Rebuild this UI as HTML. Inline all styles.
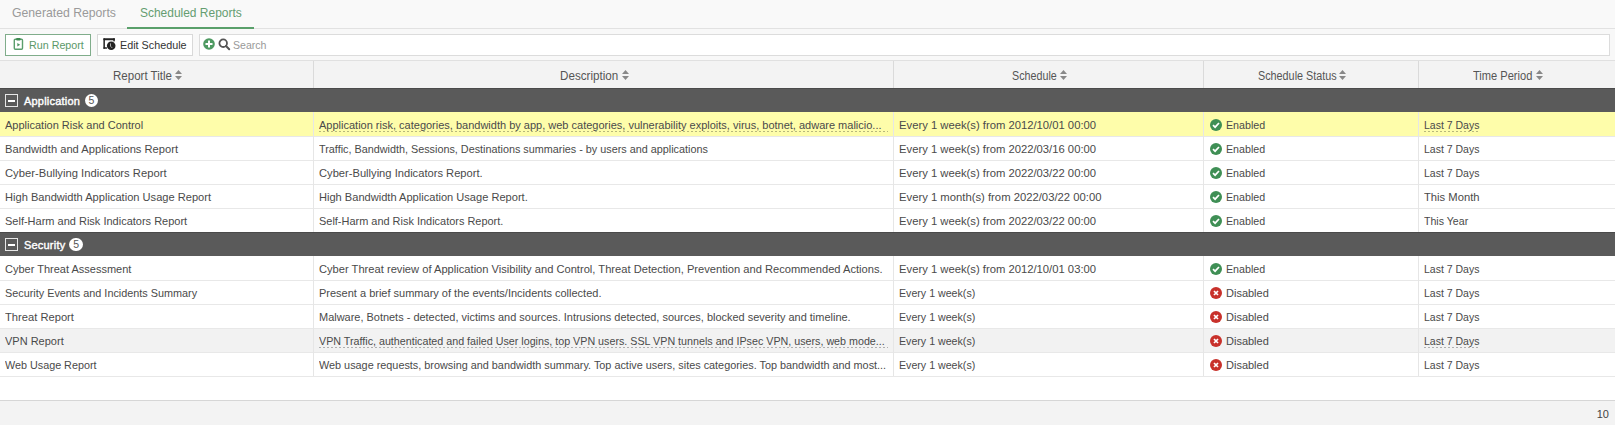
<!DOCTYPE html>
<html><head><meta charset="utf-8">
<style>
*{box-sizing:border-box;margin:0;padding:0}
html,body{width:1615px;height:425px;overflow:hidden;background:#f8f8f8;font-family:"Liberation Sans",sans-serif;color:#333}
.abs{position:absolute}
.t{display:inline-block;transform-origin:0 50%;white-space:nowrap}
.tabs{left:0;top:0;width:1615px;height:29px;background:#f9f9f9;border-bottom:1px solid #e2e2e2}
.tab{position:absolute;top:0;height:29px;font-size:13px;line-height:25px}
.t1{left:12px;color:#9a9a9a}
.t2{left:140px;color:#659d71}
.uline{left:127px;top:27px;width:127px;height:2px;background:#5aa06b}
.btn{position:absolute;top:34px;height:22px;background:#fff;border:1px solid #d9d9d9;font-size:11px;line-height:20px}
.search{left:199px;top:34px;width:1411px;height:22px;background:#fff;border:1px solid #dcdcdc}
.toolbar-line{left:0;top:60px;width:1615px;height:1px;background:#e0e0e0}
.hdr{left:0;top:61px;width:1615px;height:27px;background:#f3f3f3}
.hdr .ht{position:absolute;white-space:nowrap;font-size:12px;color:#555;line-height:26px;top:2px}
.hdr .s{position:absolute;width:7px;height:10px;top:9px}
.vd{position:absolute;width:1px;background:#dadada}
.bv{background:#e6e6e6}
.grp{position:absolute;left:0;width:1615px;height:24px;background:#5a5a5a;border-top:1px solid #4a4a4a;color:#fff}
.grp .box{position:absolute;left:5px;top:5px;width:13px;height:13px;border:1px solid #e6e6e6}
.grp .box i{position:absolute;left:2px;top:5px;width:7px;height:2px;background:#fff}
.grp .lbl{position:absolute;left:24px;top:1px;line-height:23px;font-size:11px;font-weight:normal;-webkit-text-stroke:0.4px #fff;letter-spacing:0.2px}
.grp .badge{position:absolute;top:4.8px;width:13.4px;height:13.4px;border-radius:50%;background:#fff;color:#555;font-size:10.5px;line-height:13.4px;text-align:center}
.row{position:absolute;left:0;width:1615px;height:24px;background:#fff;font-size:11px;color:#4a4a4a}
.sep{position:absolute;left:0;width:1615px;height:1px;background:#e8e8e8}
.row.sel{background:#fefdaa}
.row.hov{background:#f2f2f2}
.c{position:absolute;top:0;height:24px;line-height:24px;padding-top:1px;white-space:nowrap;overflow:hidden}
.c1{left:5px;width:305px}
.c2{left:319px;width:572px}
.c3{left:899px;width:300px}
.c4{left:1210px;width:205px}
.c5{left:1424px;width:190px}
.ul{position:absolute;height:1px;background:repeating-linear-gradient(90deg,rgba(0,0,0,0.28) 0 2px,transparent 2px 4px)}
.ic{display:inline-block;width:12px;height:12px;vertical-align:-2px;margin-right:4px}
.footer{left:0;top:400px;width:1615px;height:25px;background:#f3f3f3;border-top:1px solid #d6d6d6}
.blank{left:0;top:377px;width:1615px;height:23px;background:#fff}

</style></head>
<body>
<div class="abs tabs"></div>
<div class="tab t1"><span class="t" style="transform:scaleX(0.94)">Generated Reports</span></div>
<div class="tab t2"><span class="t" style="transform:scaleX(0.92)">Scheduled Reports</span></div>
<div class="abs uline"></div>
<div class="btn" style="left:5px;width:86px;border-color:#80ad8b;color:#5b9868">
  <svg class="abs" style="left:6.9px;top:2.4px" width="11" height="13" viewBox="0 0 11 13"><rect x="1.3" y="2.3" width="8.2" height="10" rx="1" fill="none" stroke="#5a9e6c" stroke-width="1.4"/><rect x="3.2" y="1" width="4.4" height="2.6" rx="0.8" fill="#3f8a52"/><path d="M4.3 6 L7.2 7.7 L4.3 9.4Z" fill="#4f9562"/></svg>
  <span class="abs t" style="left:22.6px;top:0;transform:scaleX(0.975)">Run Report</span>
</div>
<div class="btn" style="left:97px;width:96px;color:#333">
  <svg class="abs" style="left:5px;top:3px" width="14" height="13" viewBox="0 0 14 13"><rect x="0.4" y="0.2" width="11.4" height="2" rx="0.6" fill="#222"/><rect x="10.3" y="0.2" width="1.5" height="3.2" fill="#222"/><rect x="0.4" y="0.2" width="1.5" height="10.6" rx="0.5" fill="#222"/><rect x="0.4" y="9.3" width="3.6" height="1.5" rx="0.5" fill="#222"/><circle cx="8.2" cy="7.8" r="4.3" fill="#222"/><path d="M7.5 5.4 V8.2 L9.2 9.9" fill="none" stroke="#bbb" stroke-width="0.9"/></svg>
  <span class="abs t" style="left:22px;top:0;transform:scaleX(0.98)">Edit Schedule</span>
</div>
<div class="abs search">
  <svg class="abs" style="left:3px;top:3px" width="12" height="12" viewBox="0 0 12 12"><circle cx="6" cy="6" r="5.8" fill="#4e9a62"/><path d="M6 2.5 V9.5 M2.5 6 H9.5" stroke="#fff" stroke-width="2"/></svg>
  <svg class="abs" style="left:18px;top:3px" width="13" height="13" viewBox="0 0 13 13"><circle cx="5.2" cy="5.2" r="3.8" fill="none" stroke="#555" stroke-width="1.8"/><path d="M8 8 L11.2 11.2" stroke="#555" stroke-width="2" stroke-linecap="round"/></svg>
  <span class="abs t" style="left:33px;top:0;font-size:11px;line-height:20px;color:#999;transform:scaleX(0.96)">Search</span>
</div>
<div class="abs toolbar-line"></div>
<div class="abs hdr"><span class="ht t" style="left:112.9px;transform:scaleX(0.96)">Report Title</span><svg class="s" style="left:175px" viewBox="0 0 7 10"><path d="M3.5 0 L7 4 H0Z M0 6 H7 L3.5 10Z" fill="#888"/></svg><span class="ht t" style="left:560.1999999999999px;transform:scaleX(0.97)">Description</span><svg class="s" style="left:621.5px" viewBox="0 0 7 10"><path d="M3.5 0 L7 4 H0Z M0 6 H7 L3.5 10Z" fill="#888"/></svg><span class="ht t" style="left:1011.9px;transform:scaleX(0.894)">Schedule</span><svg class="s" style="left:1060.2px" viewBox="0 0 7 10"><path d="M3.5 0 L7 4 H0Z M0 6 H7 L3.5 10Z" fill="#888"/></svg><span class="ht t" style="left:1257.8000000000002px;transform:scaleX(0.9)">Schedule Status</span><svg class="s" style="left:1339.2px" viewBox="0 0 7 10"><path d="M3.5 0 L7 4 H0Z M0 6 H7 L3.5 10Z" fill="#888"/></svg><span class="ht t" style="left:1472.7px;transform:scaleX(0.924)">Time Period</span><svg class="s" style="left:1535.7px" viewBox="0 0 7 10"><path d="M3.5 0 L7 4 H0Z M0 6 H7 L3.5 10Z" fill="#888"/></svg><div class="vd hv" style="left:313px;top:0;height:27px"></div><div class="vd hv" style="left:893px;top:0;height:27px"></div><div class="vd hv" style="left:1203px;top:0;height:27px"></div><div class="vd hv" style="left:1418px;top:0;height:27px"></div></div>
<div class="grp" style="top:88px"><div class="box"><i></i></div><span class="lbl">Application</span><span class="badge" style="left:84.8px">5</span></div>
<div class="row sel" style="top:112px"><div class="c c1"><span class="t" style="transform:scaleX(1.0)">Application Risk and Control</span></div><div class="c c2"><span class="t dot" style="transform:scaleX(1.0)">Application risk, categories, bandwidth by app, web categories, vulnerability exploits, virus, botnet, adware malicio...</span></div><div class="c c3"><span class="t" style="transform:scaleX(1.023)">Every 1 week(s) from 2012/10/01 00:00</span></div><div class="c c4"><svg class="ic" viewBox="0 0 12 12"><circle cx="6" cy="6" r="6" fill="#3f8f55"/><path d="M3 6.2 L5.1 8.2 L9 4" fill="none" stroke="#fff" stroke-width="1.7"/></svg><span class="t" style="transform:scaleX(0.97)">Enabled</span></div><div class="c c5"><span class="t dot" style="transform:scaleX(0.955)">Last 7 Days</span></div></div>
<div class="row " style="top:136px"><div class="c c1"><span class="t" style="transform:scaleX(1.014)">Bandwidth and Applications Report</span></div><div class="c c2"><span class="t" style="transform:scaleX(0.983)">Traffic, Bandwidth, Sessions, Destinations summaries - by users and applications</span></div><div class="c c3"><span class="t" style="transform:scaleX(1.023)">Every 1 week(s) from 2022/03/16 00:00</span></div><div class="c c4"><svg class="ic" viewBox="0 0 12 12"><circle cx="6" cy="6" r="6" fill="#3f8f55"/><path d="M3 6.2 L5.1 8.2 L9 4" fill="none" stroke="#fff" stroke-width="1.7"/></svg><span class="t" style="transform:scaleX(0.97)">Enabled</span></div><div class="c c5"><span class="t" style="transform:scaleX(0.955)">Last 7 Days</span></div></div>
<div class="row " style="top:160px"><div class="c c1"><span class="t" style="transform:scaleX(1.02)">Cyber-Bullying Indicators Report</span></div><div class="c c2"><span class="t" style="transform:scaleX(1.014)">Cyber-Bullying Indicators Report.</span></div><div class="c c3"><span class="t" style="transform:scaleX(1.023)">Every 1 week(s) from 2022/03/22 00:00</span></div><div class="c c4"><svg class="ic" viewBox="0 0 12 12"><circle cx="6" cy="6" r="6" fill="#3f8f55"/><path d="M3 6.2 L5.1 8.2 L9 4" fill="none" stroke="#fff" stroke-width="1.7"/></svg><span class="t" style="transform:scaleX(0.97)">Enabled</span></div><div class="c c5"><span class="t" style="transform:scaleX(0.955)">Last 7 Days</span></div></div>
<div class="row " style="top:184px"><div class="c c1"><span class="t" style="transform:scaleX(1.009)">High Bandwidth Application Usage Report</span></div><div class="c c2"><span class="t" style="transform:scaleX(1.007)">High Bandwidth Application Usage Report.</span></div><div class="c c3"><span class="t" style="transform:scaleX(1.025)">Every 1 month(s) from 2022/03/22 00:00</span></div><div class="c c4"><svg class="ic" viewBox="0 0 12 12"><circle cx="6" cy="6" r="6" fill="#3f8f55"/><path d="M3 6.2 L5.1 8.2 L9 4" fill="none" stroke="#fff" stroke-width="1.7"/></svg><span class="t" style="transform:scaleX(0.97)">Enabled</span></div><div class="c c5"><span class="t" style="transform:scaleX(1.02)">This Month</span></div></div>
<div class="row " style="top:208px"><div class="c c1"><span class="t" style="transform:scaleX(1.0)">Self-Harm and Risk Indicators Report</span></div><div class="c c2"><span class="t" style="transform:scaleX(0.995)">Self-Harm and Risk Indicators Report.</span></div><div class="c c3"><span class="t" style="transform:scaleX(1.023)">Every 1 week(s) from 2022/03/22 00:00</span></div><div class="c c4"><svg class="ic" viewBox="0 0 12 12"><circle cx="6" cy="6" r="6" fill="#3f8f55"/><path d="M3 6.2 L5.1 8.2 L9 4" fill="none" stroke="#fff" stroke-width="1.7"/></svg><span class="t" style="transform:scaleX(0.97)">Enabled</span></div><div class="c c5"><span class="t" style="transform:scaleX(0.963)">This Year</span></div></div>
<div class="grp" style="top:232px"><div class="box"><i></i></div><span class="lbl">Security</span><span class="badge" style="left:69.4px">5</span></div>
<div class="row " style="top:256px"><div class="c c1"><span class="t" style="transform:scaleX(1.0)">Cyber Threat Assessment</span></div><div class="c c2"><span class="t" style="transform:scaleX(1.013)">Cyber Threat review of Application Visibility and Control, Threat Detection, Prevention and Recommended Actions.</span></div><div class="c c3"><span class="t" style="transform:scaleX(1.023)">Every 1 week(s) from 2012/10/01 03:00</span></div><div class="c c4"><svg class="ic" viewBox="0 0 12 12"><circle cx="6" cy="6" r="6" fill="#3f8f55"/><path d="M3 6.2 L5.1 8.2 L9 4" fill="none" stroke="#fff" stroke-width="1.7"/></svg><span class="t" style="transform:scaleX(0.97)">Enabled</span></div><div class="c c5"><span class="t" style="transform:scaleX(0.955)">Last 7 Days</span></div></div>
<div class="row " style="top:280px"><div class="c c1"><span class="t" style="transform:scaleX(0.985)">Security Events and Incidents Summary</span></div><div class="c c2"><span class="t" style="transform:scaleX(1.0)">Present a brief summary of the events/Incidents collected.</span></div><div class="c c3"><span class="t" style="transform:scaleX(0.967)">Every 1 week(s)</span></div><div class="c c4"><svg class="ic" viewBox="0 0 12 12"><circle cx="6" cy="6" r="6" fill="#c8312b"/><path d="M4 4 L8 8 M8 4 L4 8" stroke="#fff" stroke-width="1.7"/></svg><span class="t" style="transform:scaleX(1.0)">Disabled</span></div><div class="c c5"><span class="t" style="transform:scaleX(0.955)">Last 7 Days</span></div></div>
<div class="row " style="top:304px"><div class="c c1"><span class="t" style="transform:scaleX(1.016)">Threat Report</span></div><div class="c c2"><span class="t" style="transform:scaleX(0.996)">Malware, Botnets - detected, victims and sources. Intrusions detected, sources, blocked severity and timeline.</span></div><div class="c c3"><span class="t" style="transform:scaleX(0.967)">Every 1 week(s)</span></div><div class="c c4"><svg class="ic" viewBox="0 0 12 12"><circle cx="6" cy="6" r="6" fill="#c8312b"/><path d="M4 4 L8 8 M8 4 L4 8" stroke="#fff" stroke-width="1.7"/></svg><span class="t" style="transform:scaleX(1.0)">Disabled</span></div><div class="c c5"><span class="t" style="transform:scaleX(0.955)">Last 7 Days</span></div></div>
<div class="row hov" style="top:328px"><div class="c c1"><span class="t" style="transform:scaleX(1.0)">VPN Report</span></div><div class="c c2"><span class="t dot" style="transform:scaleX(0.974)">VPN Traffic, authenticated and failed User logins, top VPN users. SSL VPN tunnels and IPsec VPN, users, web mode...</span></div><div class="c c3"><span class="t" style="transform:scaleX(0.967)">Every 1 week(s)</span></div><div class="c c4"><svg class="ic" viewBox="0 0 12 12"><circle cx="6" cy="6" r="6" fill="#c8312b"/><path d="M4 4 L8 8 M8 4 L4 8" stroke="#fff" stroke-width="1.7"/></svg><span class="t" style="transform:scaleX(1.0)">Disabled</span></div><div class="c c5"><span class="t dot" style="transform:scaleX(0.955)">Last 7 Days</span></div></div>
<div class="row " style="top:352px"><div class="c c1"><span class="t" style="transform:scaleX(0.98)">Web Usage Report</span></div><div class="c c2"><span class="t" style="transform:scaleX(0.986)">Web usage requests, browsing and bandwidth summary. Top active users, sites categories. Top bandwidth and most...</span></div><div class="c c3"><span class="t" style="transform:scaleX(0.967)">Every 1 week(s)</span></div><div class="c c4"><svg class="ic" viewBox="0 0 12 12"><circle cx="6" cy="6" r="6" fill="#c8312b"/><path d="M4 4 L8 8 M8 4 L4 8" stroke="#fff" stroke-width="1.7"/></svg><span class="t" style="transform:scaleX(1.0)">Disabled</span></div><div class="c c5"><span class="t" style="transform:scaleX(0.955)">Last 7 Days</span></div></div>
<div class="sep" style="top:136px"></div><div class="sep" style="top:160px"></div><div class="sep" style="top:184px"></div><div class="sep" style="top:208px"></div><div class="sep" style="top:280px"></div><div class="sep" style="top:304px"></div><div class="sep" style="top:328px"></div><div class="sep" style="top:352px"></div><div class="sep" style="top:376px"></div><div class="vd bv" style="left:313px;top:112px;height:120px"></div><div class="vd bv" style="left:893px;top:112px;height:120px"></div><div class="vd bv" style="left:1203px;top:112px;height:120px"></div><div class="vd bv" style="left:1418px;top:112px;height:120px"></div><div class="vd bv" style="left:313px;top:256px;height:120px"></div><div class="vd bv" style="left:893px;top:256px;height:120px"></div><div class="vd bv" style="left:1203px;top:256px;height:120px"></div><div class="vd bv" style="left:1418px;top:256px;height:120px"></div><div class="ul" style="left:319px;top:131px;width:569px"></div><div class="ul" style="left:1424px;top:131px;width:56px"></div><div class="ul" style="left:319px;top:347px;width:569px"></div><div class="ul" style="left:1424px;top:347px;width:56px"></div>
<div class="abs blank"></div>
<div class="abs footer"><span class="abs" style="right:6px;top:7px;font-size:11px;color:#444">10</span></div>

</body></html>
